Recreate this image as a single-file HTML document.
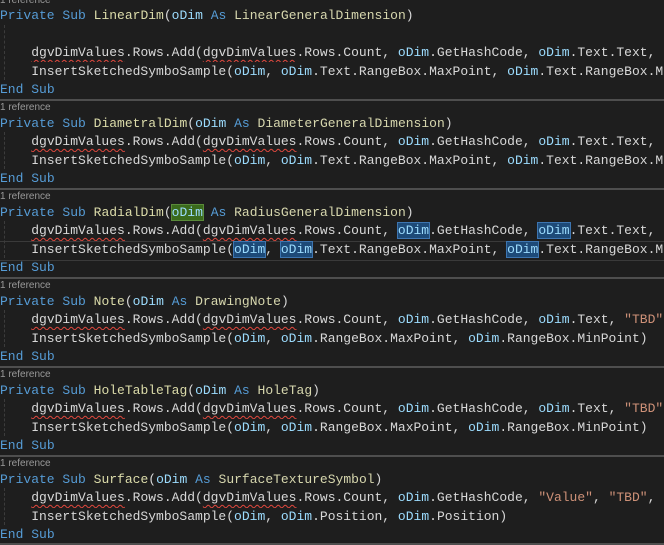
<!DOCTYPE html>
<html><head><meta charset="utf-8"><style>
html,body{margin:0;padding:0;background:#1e1e1e;width:664px;height:545px;overflow:hidden;position:relative}
.l{position:absolute;left:0;width:664px;overflow:hidden;height:18.6px;line-height:18.6px;font-family:"Liberation Mono",monospace;font-size:13px;color:#d8d8d8;white-space:pre;margin-top:1px}
.cl{position:absolute;left:0;font-family:"Liberation Sans",sans-serif;font-size:10px;color:#9a9a9a;line-height:12px;margin-top:2px}
.sep{position:absolute;left:0;width:664px;height:2px;background:#4e4e4e}
.k{color:#569cd6}.f{color:#dcdcaa}.t{color:#d7d7ae}.p{color:#9cdcfe}.s{color:#ce9178}
.sq{text-decoration:underline wavy #e0483e;text-decoration-thickness:1px;text-underline-offset:3px}
.hb{background:#1d4a78;outline:1px solid #3d75b0}
.hg{background:#3a6a1c;outline:1px solid #5a8a3a}
.g{position:absolute;left:4px;width:0;border-left:1px dashed #3c3c3c}
.cur{position:absolute;left:0;width:664px;border-top:1px solid #3a3a3a;border-bottom:1px solid #3a3a3a}
</style></head><body>
<div class="cl" style="top:-7px">1 reference</div>
<div class="g" style="top:25px;height:55px"></div>
<div class="l" style="top:5.7px"><span class="k">Private</span> <span class="k">Sub</span> <span class="f">LinearDim</span>(<span class="p">oDim</span> <span class="k">As</span> <span class="t">LinearGeneralDimension</span>)</div>
<div class="l" style="top:42.9px">    <span class="sq">dgvDimValues</span>.Rows.Add(<span class="sq">dgvDimValues</span>.Rows.Count, <span class="p">oDim</span>.GetHashCode, <span class="p">oDim</span>.Text.Text, <span class="s">"TBD"</span></div>
<div class="l" style="top:61.5px">    InsertSketchedSymboSample(<span class="p">oDim</span>, <span class="p">oDim</span>.Text.RangeBox.MaxPoint, <span class="p">oDim</span>.Text.RangeBox.MinPoint)</div>
<div class="l" style="top:80.1px"><span class="k">End</span> <span class="k">Sub</span></div>

<div class="sep" style="top:99px"></div>
<div class="cl" style="top:100px">1 reference</div>
<div class="g" style="top:132px;height:37px"></div>
<div class="l" style="top:113.5px"><span class="k">Private</span> <span class="k">Sub</span> <span class="f">DiametralDim</span>(<span class="p">oDim</span> <span class="k">As</span> <span class="t">DiameterGeneralDimension</span>)</div>
<div class="l" style="top:132.1px">    <span class="sq">dgvDimValues</span>.Rows.Add(<span class="sq">dgvDimValues</span>.Rows.Count, <span class="p">oDim</span>.GetHashCode, <span class="p">oDim</span>.Text.Text, <span class="s">"TBD"</span></div>
<div class="l" style="top:150.7px">    InsertSketchedSymboSample(<span class="p">oDim</span>, <span class="p">oDim</span>.Text.RangeBox.MaxPoint, <span class="p">oDim</span>.Text.RangeBox.MinPoint)</div>
<div class="l" style="top:169.3px"><span class="k">End</span> <span class="k">Sub</span></div>

<div class="sep" style="top:188px"></div>
<div class="cl" style="top:189px">1 reference</div>
<div class="cur" style="top:240.5px;height:18px"></div>
<div class="g" style="top:221px;height:37px"></div>
<div class="l" style="top:202.5px"><span class="k">Private</span> <span class="k">Sub</span> <span class="f">RadialDim</span>(<span class="p hg">oDim</span> <span class="k">As</span> <span class="t">RadiusGeneralDimension</span>)</div>
<div class="l" style="top:221.1px">    <span class="sq">dgvDimValues</span>.Rows.Add(<span class="sq">dgvDimValues</span>.Rows.Count, <span class="p hb">oDim</span>.GetHashCode, <span class="p hb">oDim</span>.Text.Text, <span class="s">"TBD"</span></div>
<div class="l" style="top:239.7px">    InsertSketchedSymboSample(<span class="p hb">oDim</span>, <span class="p hb">oDim</span>.Text.RangeBox.MaxPoint, <span class="p hb">oDim</span>.Text.RangeBox.MinPoint)</div>
<div class="l" style="top:258.3px"><span class="k">End</span> <span class="k">Sub</span></div>

<div class="sep" style="top:277px"></div>
<div class="cl" style="top:278px">1 reference</div>
<div class="g" style="top:310px;height:37px"></div>
<div class="l" style="top:291.5px"><span class="k">Private</span> <span class="k">Sub</span> <span class="f">Note</span>(<span class="p">oDim</span> <span class="k">As</span> <span class="t">DrawingNote</span>)</div>
<div class="l" style="top:310.1px">    <span class="sq">dgvDimValues</span>.Rows.Add(<span class="sq">dgvDimValues</span>.Rows.Count, <span class="p">oDim</span>.GetHashCode, <span class="p">oDim</span>.Text, <span class="s">"TBD"</span>,</div>
<div class="l" style="top:328.7px">    InsertSketchedSymboSample(<span class="p">oDim</span>, <span class="p">oDim</span>.RangeBox.MaxPoint, <span class="p">oDim</span>.RangeBox.MinPoint)</div>
<div class="l" style="top:347.3px"><span class="k">End</span> <span class="k">Sub</span></div>

<div class="sep" style="top:366px"></div>
<div class="cl" style="top:367px">1 reference</div>
<div class="g" style="top:399px;height:37px"></div>
<div class="l" style="top:380.5px"><span class="k">Private</span> <span class="k">Sub</span> <span class="f">HoleTableTag</span>(<span class="p">oDim</span> <span class="k">As</span> <span class="t">HoleTag</span>)</div>
<div class="l" style="top:399.1px">    <span class="sq">dgvDimValues</span>.Rows.Add(<span class="sq">dgvDimValues</span>.Rows.Count, <span class="p">oDim</span>.GetHashCode, <span class="p">oDim</span>.Text, <span class="s">"TBD"</span>,</div>
<div class="l" style="top:417.7px">    InsertSketchedSymboSample(<span class="p">oDim</span>, <span class="p">oDim</span>.RangeBox.MaxPoint, <span class="p">oDim</span>.RangeBox.MinPoint)</div>
<div class="l" style="top:436.3px"><span class="k">End</span> <span class="k">Sub</span></div>

<div class="sep" style="top:455px"></div>
<div class="cl" style="top:456px">1 reference</div>
<div class="g" style="top:488px;height:37px"></div>
<div class="l" style="top:469.5px"><span class="k">Private</span> <span class="k">Sub</span> <span class="f">Surface</span>(<span class="p">oDim</span> <span class="k">As</span> <span class="t">SurfaceTextureSymbol</span>)</div>
<div class="l" style="top:488.1px">    <span class="sq">dgvDimValues</span>.Rows.Add(<span class="sq">dgvDimValues</span>.Rows.Count, <span class="p">oDim</span>.GetHashCode, <span class="s">"Value"</span>, <span class="s">"TBD"</span>,</div>
<div class="l" style="top:506.7px">    InsertSketchedSymboSample(<span class="p">oDim</span>, <span class="p">oDim</span>.Position, <span class="p">oDim</span>.Position)</div>
<div class="l" style="top:525.3px"><span class="k">End</span> <span class="k">Sub</span></div>
<div class="sep" style="top:543px"></div>
</body></html>
